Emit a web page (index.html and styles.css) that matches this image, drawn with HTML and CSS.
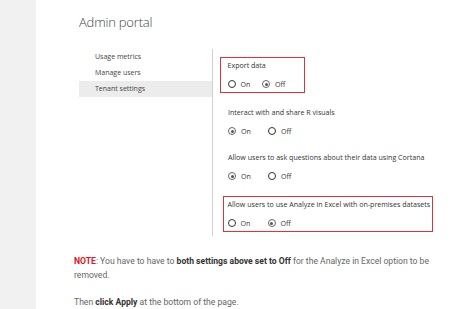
FILE: index.html
```html
<!DOCTYPE html>
<html lang="en">
<head>
    <meta charset="UTF-8">
    <meta name="viewport" content="width=device-width, initial-scale=1.0">
    <title>Admin portal</title>
    <link rel="stylesheet" href="styles.css">
</head>
<body>
    <div id="page">
        <div id="strip"></div>
        <div id="main">
            <h1 id="title">Admin portal</h1>
            <div id="portal">
                <ul id="menu">
                    <li>Usage metrics</li>
                    <li>Manage users</li>
                    <li class="active">Tenant settings</li>
                </ul>
                <div id="settings">
                    <div class="setting marked first">
                        <div class="label">Export data</div>
                        <div class="radios">
                            <span class="radio"><span class="dot"></span>On</span>
                            <span class="radio"><span class="dot checked"></span>Off</span>
                        </div>
                    </div>
                    <div class="setting">
                        <div class="label">Interact with and share R visuals</div>
                        <div class="radios">
                            <span class="radio"><span class="dot checked"></span>On</span>
                            <span class="radio"><span class="dot"></span>Off</span>
                        </div>
                    </div>
                    <div class="setting">
                        <div class="label">Allow users to ask questions about their data using Cortana</div>
                        <div class="radios">
                            <span class="radio"><span class="dot checked"></span>On</span>
                            <span class="radio"><span class="dot"></span>Off</span>
                        </div>
                    </div>
                    <div class="setting marked last">
                        <div class="label">Allow users to use Analyze in Excel with on-premises datasets</div>
                        <div class="radios">
                            <span class="radio"><span class="dot"></span>On</span>
                            <span class="radio"><span class="dot checked"></span>Off</span>
                        </div>
                    </div>
                </div>
            </div>
            <p class="note"><span class="red">NOTE</span>: You have to have to <b>both settings above set to Off</b> for the Analyze in Excel option to be removed.</p>
            <p class="note">Then <b>click Apply</b> at the bottom of the page.</p>
        </div>
    </div>
</body>
</html>
```

FILE: styles.css
```css
body {
    margin: 0;
    padding: 0;
    background-color: #ffffff;
    font-family: "Open Sans", sans-serif;
}

#page {
    display: flex;
    min-height: 309px;
}

#strip {
    width: 36px;
    background-color: #f1f1f1;
}

#main {
    flex: 1;
    padding-left: 43px;
}

#title {
    margin: 0;
    padding-top: 13px;
    height: 49px;
    font-size: 13px;
    font-weight: 300;
    letter-spacing: -0.2px;
    color: #444;
    line-height: 18px;
    box-sizing: border-box;
}

#portal {
    display: flex;
}

#menu {
    list-style: none;
    margin: 0;
    padding: 0;
    width: 133px;
}

#menu li {
    height: 16px;
    line-height: 16px;
    padding-left: 16px;
    font-size: 7px;
    color: #444;
}

#menu li.active {
    background-color: #ececec;
}

#settings {
    border-left: 1px solid #d0d0d0;
    padding: 8px 0 4px 7px;
}

.setting {
    padding: 0 8px;
    margin-bottom: 13px;
}

.setting.marked {
    border: 1.5px solid #e0323c;
    padding: 1px 7px 1px 6.5px;
}

.setting.first {
    width: 69px;
}

.setting.last {
    margin-left: 3px;
    padding-left: 3.5px;
    padding-right: 0;
    width: 204px;
    margin-bottom: 0;
}

.label {
    height: 12px;
    line-height: 12px;
    font-size: 7.1px;
    color: #333;
    white-space: nowrap;
}

.radios {
    display: flex;
    margin-top: 6px;
    height: 14px;
    align-items: center;
}

.radio {
    display: flex;
    align-items: center;
    width: 40px;
    font-size: 7.1px;
    color: #333;
}

.dot {
    width: 6px;
    height: 6px;
    border: 1px solid #333;
    border-radius: 50%;
    margin-right: 5px;
    position: relative;
}

.dot.checked {
    border-color: #666;
}

.dot.checked::after {
    content: "";
    position: absolute;
    left: 1.5px;
    top: 1.5px;
    width: 3px;
    height: 3px;
    border-radius: 50%;
    background-color: #555;
}

.note {
    font-family: Roboto, sans-serif;
    font-size: 8.6px;
    line-height: 14px;
    color: #666;
    margin: 18px 0 0 -5px;
    width: 372px;
}

.note + .note {
    margin-top: 13px;
}

.note b {
    color: #333;
}

.red {
    color: #e8101a;
    font-weight: bold;
}
```
